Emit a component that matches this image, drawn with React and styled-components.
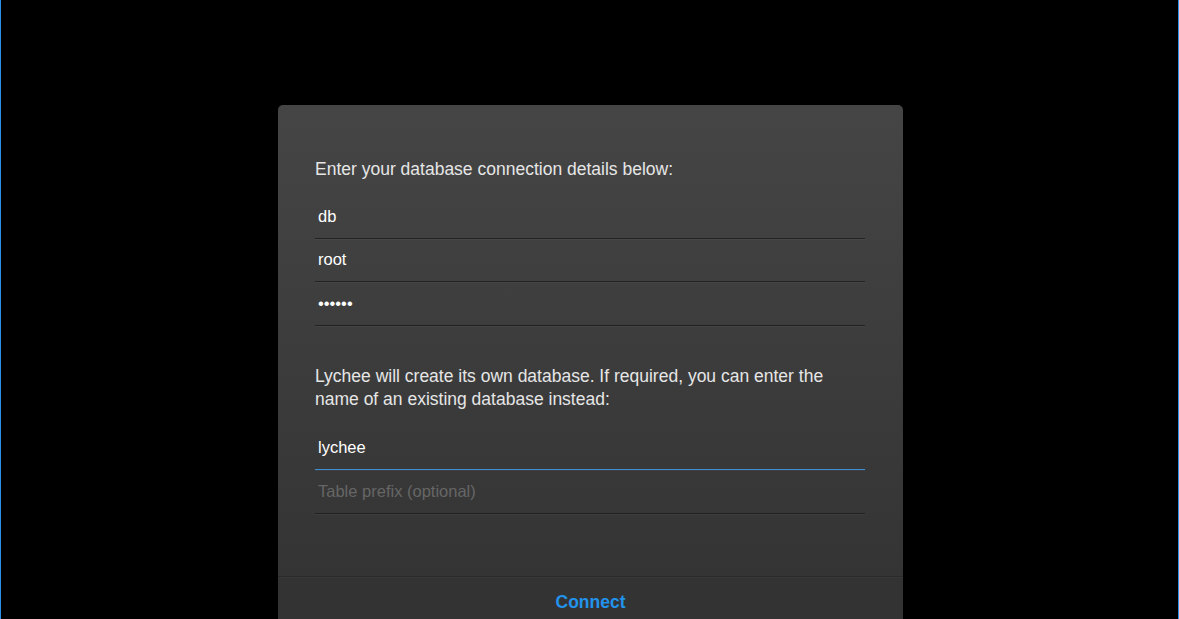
import React from "react";
import styled, { createGlobalStyle } from "styled-components";

const GlobalStyle = createGlobalStyle`
  html, body {
    margin: 0;
    padding: 0;
    background: #000;
    overflow: hidden;
  }
  * { box-sizing: border-box; }
`;

const Page = styled.div`
  height: 100vh;
  background: #000;
  border-left: 1px solid #2b8fe8;
  border-right: 1px solid #2b8fe8;
  display: flex;
  justify-content: center;
  align-items: flex-start;
  padding-top: 105px;
  font-family: "Liberation Sans", Arial, sans-serif;
`;

const Modal = styled.div`
  width: 625px;
  margin-left: 2px;
  border-radius: 5px;
  background: linear-gradient(to bottom, #454545, #333 96%);
  box-shadow: 0 1px 4px rgba(0, 0, 0, 0.4);
  display: flex;
  flex-direction: column;
  overflow: hidden;
`;

const Content = styled.div`
  padding: 53px 38px 62px 37px;
`;

const Text = styled.p`
  margin: 0 0 ${(p) => p.$gap ?? 16}px;
  font-size: 17.5px;
  line-height: 23px;
  color: #e6e6e6;
`;

const Group = styled.div`
  display: flex;
  flex-direction: column;
  margin-bottom: 39px;
  &:last-child { margin-bottom: 0; }
`;

const Input = styled.input`
  width: 100%;
  height: 43.5px;
  padding: 0 3px;
  margin: 0;
  background: transparent;
  border: none;
  border-bottom: 1px solid ${(p) => (p.$focused ? "#3d8fd6" : "#222")};
  box-shadow: 0 1px 0 rgba(255, 255, 255, 0.04);
  outline: none;
  font-family: "Liberation Sans", Arial, sans-serif;
  font-size: 16.5px;
  color: #fff;
  &::placeholder { color: #666; }
`;

const Footer = styled.div`
  height: 50px;
  border-top: 1px solid #2a2a2a;
  box-shadow: inset 0 1px 0 rgba(255, 255, 255, 0.02);
  background: #333;
  display: flex;
`;

const Button = styled.button`
  flex: 1;
  background: transparent;
  border: none;
  color: #2293ec;
  font-family: "Liberation Sans", Arial, sans-serif;
  font-weight: bold;
  font-size: 17.5px;
  cursor: pointer;
  padding: 3px 0 0;
`;

export default function App() {
  return (
    <>
      <GlobalStyle />
      <Page>
        <Modal>
          <Content>
            <Group>
              <Text $gap={14}>Enter your database connection details below:</Text>
              <Input type="text" defaultValue="db" />
              <Input type="text" defaultValue="root" />
              <Input type="password" defaultValue="secret" />
            </Group>
            <Group>
              <Text>
                Lychee will create its own database. If required, you can enter the
                name of an existing database instead:
              </Text>
              <Input type="text" defaultValue="lychee" $focused />
              <Input type="text" placeholder="Table prefix (optional)" />
            </Group>
          </Content>
          <Footer>
            <Button>Connect</Button>
          </Footer>
        </Modal>
      </Page>
    </>
  );
}
